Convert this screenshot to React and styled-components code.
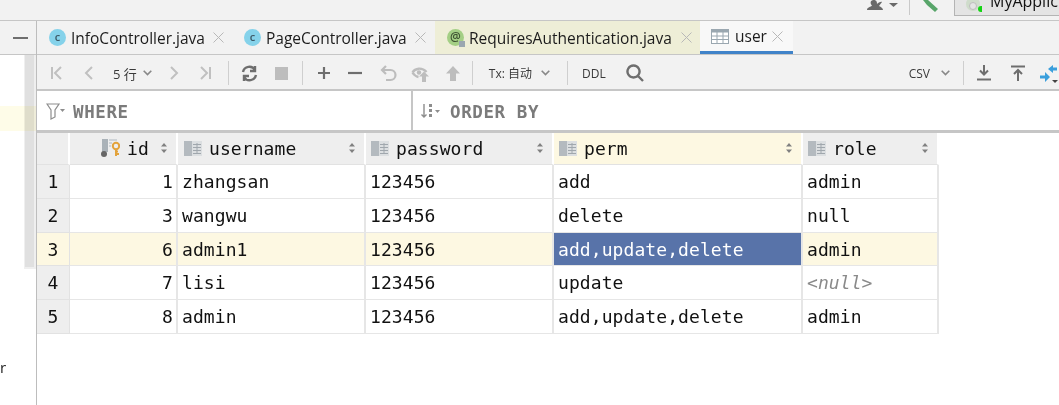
import React from 'react';
import styled, {createGlobalStyle} from 'styled-components';

const Global = createGlobalStyle`
html, body {
  margin: 0;
  padding: 0;
  background: #fff;
}
`;

const mono = '"DejaVu Sans Mono", "Liberation Mono", monospace';
const ui = '"Open Sans", "Noto Sans", "Noto Sans CJK SC", sans-serif';

const Page = styled.div`
width: 1059px;
height: 405px;
overflow: hidden;
display: flex;
flex-direction: column;
font-family: ${ui};
`;

const TopBar = styled.div`
height: 20px;
flex: none;
background: #f2f2f2;
border-bottom: 1px solid #c6c6c6;
display: flex;
justify-content: flex-end;
align-items: flex-start;
`;

const TopIcon = styled.svg`
display: block;
flex: none;
`;

const Divider = styled.div`
width: 1px;
height: 15px;
background: #c9c9c9;
margin: 0 10px 0 11px;
`;

const RunConfig = styled.div`
width: 105px;
height: 16px;
margin-left: 14px;
background: #e4e4e4;
border-left: 1px solid #b4b4b4;
border-bottom: 1px solid #b4b4b4;
box-sizing: border-box;
padding-left: 10px;
display: flex;
gap: 8px;
align-items: flex-start;
overflow: hidden;
`;

const RunName = styled.span`
font-size: 16px;
line-height: 20px;
margin-top: -9px;
color: #111;
white-space: nowrap;
`;

const Main = styled.div`
flex: 1;
display: flex;
min-height: 0;
`;

const Side = styled.div`
width: 36px;
flex: none;
border-right: 1px solid #bdbdbd;
display: flex;
flex-direction: column;
`;

const SideHead = styled.div`
height: 33px;
flex: none;
background: #f2f2f2;
border-bottom: 1px solid #c6c6c6;
display: flex;
align-items: center;
padding-left: 13px;
`;

const Minus = styled.div`
width: 15px;
height: 2px;
background: #6e6e6e;
`;

const SideBody = styled.div`
flex: 1;
position: relative;
background: #fff;
padding-top: 51px;
`;

const Highlight = styled.div`
height: 25px;
background: #fefce8;
`;

const Scroll = styled.div`
position: absolute;
top: 0;
right: 0;
width: 9px;
height: 212px;
background: #e0e0e0;
border-left: 1px solid #efefef;
border-right: 2px solid #efefef;
border-bottom: 2px solid #efefef;
mix-blend-mode: multiply;
`;

const Clip = styled.div`
margin-top: 226px;
font-size: 15px;
line-height: 20px;
color: #222;
`;

const Content = styled.div`
flex: 1;
min-width: 0;
display: flex;
flex-direction: column;
`;

const TabBar = styled.div`
height: 33px;
flex: none;
display: flex;
background: #f2f2f2;
border-bottom: 1px solid #c6c6c6;
`;

const Tab = styled.div`
display: flex;
align-items: center;
height: 100%;
flex: none;
box-sizing: border-box;
width: ${p => p.$w}px;
padding-left: ${p => p.$pad}px;
background: ${p => p.$bg || 'transparent'};
border-bottom: ${p => p.$active ? '3px solid #4083c9' : 'none'};
font-size: 15.5px;
color: #1c1c1c;
white-space: nowrap;
`;

const TabLabel = styled.span`
margin-left: ${p => p.$gap}px;
`;

const Close = styled.svg`
margin-left: auto;
margin-right: ${p => p.$mr}px;
flex: none;
`;

const Badge = styled.div`
position: relative;
flex: none;
width: ${p => p.$size}px;
height: ${p => p.$size}px;
border-radius: 50%;
background: ${p => p.$bg};
color: ${p => p.$fg};
font-size: ${p => p.$font}px;
font-weight: 600;
line-height: ${p => p.$size - 1}px;
text-align: center;
`;

const Lock = styled.i`
position: absolute;
right: -1px;
bottom: -1px;
width: 6px;
height: 6px;
background: #9aa7b0;
`;

const Toolbar = styled.div`
height: 36px;
flex: none;
box-sizing: border-box;
background: #f2f2f2;
border-bottom: 2px solid #c6c6c6;
display: flex;
align-items: center;
padding: 2px 0 0 13px;
overflow: hidden;
`;

const Sep = styled.div`
flex: none;
width: 1px;
height: 24px;
background: #cfcfcf;
margin: ${p => p.$m};
`;

const ToolText = styled.span`
flex: none;
font-size: ${p => p.$size || 12}px;
color: #3a3a3a;
margin: ${p => p.$m || 0};
white-space: nowrap;
`;

const Tool = styled.svg`
display: block;
flex: none;
margin: ${p => p.$m || 0};
`;

const FilterRow = styled.div`
height: 39px;
flex: none;
display: flex;
background: #fff;
border-bottom: 3px solid #c6c6c6;
`;

const Filter = styled.div`
width: ${p => p.$w}px;
box-sizing: border-box;
padding: 2px 0 0 ${p => p.$pad}px;
display: flex;
align-items: center;
gap: ${p => p.$gap}px;
border-right: ${p => p.$line ? '2px solid #c6c6c6' : 'none'};
font-family: ${mono};
font-weight: 700;
font-size: 17.5px;
letter-spacing: 0.6px;
color: #7b7b7b;
`;

const Grid = styled.div`
display: grid;
grid-template-columns: 33px 108px 188px 188px 249px 136px;
width: 902px;
font-family: ${mono};
font-size: 18px;
letter-spacing: 0.08px;
color: #111;
`;

const HeadCell = styled.div`
height: 32px;
box-sizing: border-box;
background: ${p => p.$hot ? '#fdf8e2' : '#eeeeee'};
border-right: 2px solid #fff;
border-bottom: 1px solid #e2e2e2;
display: flex;
align-items: center;
padding: 0 9px 1px ${p => p.$pad ?? 6}px;
gap: 7px;
`;

const HeadName = styled.span`
margin-right: auto;
`;

const Corner = styled(HeadCell)`
padding: 0;
`;

const Num = styled.div`
height: ${p => p.$h}px;
box-sizing: border-box;
background: ${p => p.$on ? '#fdf8e2' : '#eeeeee'};
border-bottom: 1px solid #e2e2e2;
border-right: 1px solid #e2e2e2;
display: flex;
align-items: center;
justify-content: center;
`;

const Cell = styled.div`
height: ${p => p.$h}px;
box-sizing: border-box;
background: ${p => p.$sel ? '#5873a9' : p.$on ? '#fdf8e2' : '#fff'};
color: ${p => p.$sel ? '#fff' : p.$nil ? '#8a8a8a' : '#111'};
font-style: ${p => p.$nil ? 'italic' : 'normal'};
border-right: 2px solid #e6e6e6;
border-bottom: 1px solid #e6e6e6;
display: flex;
align-items: center;
justify-content: ${p => p.$num ? 'flex-end' : 'flex-start'};
padding: 0 3px 0 4px;
white-space: nowrap;
`;

const TableIcon = () => (
  <svg width="18" height="15" viewBox="0 0 18 15" style={{flex: 'none'}}>
    <rect x="0.5" y="0.5" width="17" height="14" fill="#fff" stroke="#9aa7b0"/>
    <rect x="0" y="0" width="18" height="3.5" fill="#9aa7b0"/>
    <path d="M0 7h18M0 10.5h18M6 3v12M12 3v12" stroke="#9aa7b0" strokeWidth="1"/>
  </svg>
);

const CloseIcon = ({mr}) => (
  <Close $mr={mr} width="11" height="11" viewBox="0 0 11 11">
    <path d="M.5.5l10 10M10.5.5l-10 10" stroke="#b8b8b8" strokeWidth="1"/>
  </Close>
);

const ColumnIcon = () => (
  <svg width="18" height="15" viewBox="0 0 18 15" style={{flex: 'none'}}>
    <rect x="0" y="0" width="8" height="15" fill="#b4babf"/>
    <rect x="8" y="0" width="10" height="15" fill="#dcdfe1"/>
    <path d="M9 3.5h8M9 6.5h8M9 9.5h8M9 12.5h8M13 2v11" stroke="#a0a7ad" strokeWidth="1"/>
  </svg>
);

const KeyColumnIcon = () => (
  <svg width="19" height="18" viewBox="0 0 19 18" style={{flex: 'none'}}>
    <rect x="1" y="0" width="6" height="13" fill="#aab2b8"/>
    <path d="M8 1h8M8 4h3M8 7h2" stroke="#c4cacf" strokeWidth="1.5"/>
    <circle cx="3" cy="15" r="3" fill="#666"/>
    <circle cx="15" cy="7" r="3.2" fill="none" stroke="#e3a33c" strokeWidth="2"/>
    <path d="M15 10v7M15 15h3M15 12.5h2" stroke="#e3a33c" strokeWidth="2"/>
  </svg>
);

const SortIcon = () => (
  <svg width="6" height="10" viewBox="0 0 6 10" style={{flex: 'none'}}>
    <path d="M3 0l3 3.5H0zM3 10L0 6.500h6z" fill="#808080"/>
  </svg>
);

const Chevron = ({m, color = '#888'}) => (
  <Tool $m={m} width="9" height="6" viewBox="0 0 9 6">
    <path d="M.7.7l3.8 3.8L8.300.7" fill="none" stroke={color} strokeWidth="1.6"/>
  </Tool>
);

const Stroke = ({w = 16, h = 16, m, d, color = '#6e6e6e', sw = 2}) => (
  <Tool $m={m} width={w} height={h} viewBox={`0 0 ${w} ${h}`}>
    <path d={d} fill="none" stroke={color} strokeWidth={sw}/>
  </Tool>
);

const tabs = [
  {w: 197, pad: 12, mr: 10, gap: 5, label: 'InfoController.java', icon: <Badge $size={17} $bg="#85d2ea" $fg="#3d5a68" $font={11}>c</Badge>},
  {w: 201, pad: 10, mr: 9, gap: 5, label: 'PageController.java', icon: <Badge $size={17} $bg="#85d2ea" $fg="#3d5a68" $font={11}>c</Badge>},
  {w: 265, pad: 12, mr: 8, gap: 5, label: 'RequiresAuthentication.java', icon: <Badge $size={17} $bg="#a4cf85" $fg="#3f5433" $font={12}>@<Lock/></Badge>, bg: '#eeeed7'},
  {w: 93, pad: 11, mr: 10, gap: 6, label: 'user', icon: <TableIcon/>, bg: '#f8f8f8', active: true},
];

const columns = [
  {name: 'id', pad: 31, icon: <KeyColumnIcon/>},
  {name: 'username', pad: 6, icon: <ColumnIcon/>},
  {name: 'password', pad: 5, icon: <ColumnIcon/>},
  {name: 'perm', pad: 5, hot: true, icon: <ColumnIcon/>},
  {name: 'role', pad: 5, icon: <ColumnIcon/>},
];

const rows = [
  {n: 1, h: 34, cells: [1, 'zhangsan', '123456', 'add', 'admin']},
  {n: 2, h: 34, cells: [3, 'wangwu', '123456', 'delete', 'null']},
  {n: 3, h: 33, on: true, cells: [6, 'admin1', '123456', 'add,update,delete', 'admin']},
  {n: 4, h: 34, cells: [7, 'lisi', '123456', 'update', '<null>']},
  {n: 5, h: 34, cells: [8, 'admin', '123456', 'add,update,delete', 'admin']},
];

const App = () => {
  return (
    <Page>
      <Global/>
      <TopBar>
        <TopIcon width="31" height="10" viewBox="0 0 31 10">
          <path d="M0 10c0-3 4-3 5-4.500C3 4 3 0 6.500 0S10 2.500 10 4c1-1 4-3 5-2l-3 4c2 1 4 2 4 4z" fill="#6a6a6a"/>
          <path d="M22 3h9l-4.500 4z" fill="#6a6a6a"/>
        </TopIcon>
        <Divider/>
        <TopIcon width="20" height="12" viewBox="0 0 20 12">
          <path d="M3 0h5l10 9-3 3-8-7z" fill="#58a56a"/>
        </TopIcon>
        <RunConfig>
          <TopIcon width="17" height="15" viewBox="0 0 17 15">
            <circle cx="8" cy="4" r="7" fill="#cfdccb"/>
            <circle cx="8" cy="6" r="3.5" fill="#e4e4e4" stroke="#bdbdbd"/>
            <circle cx="16" cy="9" r="3" fill="#14d414"/>
          </TopIcon>
          <RunName>MyApplic</RunName>
        </RunConfig>
      </TopBar>
      <Main>
        <Side>
          <SideHead><Minus/></SideHead>
          <SideBody>
            <Highlight/>
            <Scroll/>
            <Clip>r</Clip>
          </SideBody>
        </Side>
        <Content>
          <TabBar>
            {tabs.map(t => (
              <Tab key={t.label} $w={t.w} $pad={t.pad} $bg={t.bg} $active={t.active}>
                {t.icon}
                <TabLabel $gap={t.gap}>{t.label}</TabLabel>
                <CloseIcon mr={t.mr}/>
              </Tab>
            ))}
          </TabBar>
          <Toolbar>
            <Stroke w={13} d="M2 2v12M11 2L5 8l6 6" color="#c0c0c0"/>
            <Stroke m="0 0 0 20px" w={11} d="M9 2L3 8l6 6" color="#c0c0c0"/>
            <ToolText $size={13} $m="0 0 0 19px">5 行</ToolText>
            <Chevron m="0 0 0 6px"/>
            <Stroke m="0 0 0 17px" w={11} d="M2 2l6 6-6 6" color="#c0c0c0"/>
            <Stroke m="0 0 0 19px" w={13} d="M2 2l6 6-6 6M11 2v12" color="#c0c0c0"/>
            <Sep $m="0 12px 0 16px"/>
            <Stroke w={17} h={17} d="M2 7a6.5 6.5 0 0 1 12-2M15 10a6.5 6.5 0 0 1-12 2M14 1v5h-5M3 16v-5h5" sw={2.4}/>
            <Tool $m="0 0 0 17px" width="13" height="13" viewBox="0 0 13 13"><rect width="13" height="13" fill="#bdbdbd"/></Tool>
            <Sep $m="0 14px 0 14px"/>
            <Stroke w={14} h={14} d="M7 1v12M1 7h12" sw={2.2}/>
            <Stroke m="0 0 0 17px" w={14} h={14} d="M0 7h14" sw={2.2}/>
            <Stroke m="0 0 0 18px" w={17} h={17} d="M6 1L2 5l4 4M2.500 5h8a5 5 0 0 1 0 10H6" color="#bdbdbd" sw={2.2}/>
            <Tool $m="0 0 0 14px" width="19" height="17" viewBox="0 0 19 17">
              <path d="M1.500 7.500C4 3 11 2 15.500 7" fill="none" stroke="#bdbdbd" strokeWidth="2.4"/>
              <path d="M1.500 7.500C3 10 5 11.500 7.500 12" fill="none" stroke="#bdbdbd" strokeWidth="2.4"/>
              <circle cx="8" cy="7.500" r="2.200" fill="#bdbdbd"/>
              <path d="M13 6.500l5 5h-3V17h-4v-5.500H8z" fill="#bdbdbd"/>
            </Tool>
            <Tool $m="0 0 0 16px" width="14" height="15" viewBox="0 0 14 15"><path d="M7 0l7 7.500H10V15H4V7.500H0z" fill="#bdbdbd"/></Tool>
            <Sep $m="0 16px 0 12px"/>
            <ToolText>Tx: 自动</ToolText>
            <Chevron m="0 0 0 9px"/>
            <Sep $m="0 14px 0 17px"/>
            <ToolText>DDL</ToolText>
            <Stroke m="0 0 0 20px" w={18} h={18} d="M7.500 1.500a6 6 0 1 0 .01 0M12 12l5 5" sw={2.4}/>
            <ToolText $m="0 0 0 265px">CSV</ToolText>
            <Chevron m="0 0 0 11px"/>
            <Sep $m="0 12px 0 13px"/>
            <Stroke w={16} h={16} d="M8 0v9M4 5.500l4 4 4-4M1 14.500h14"/>
            <Stroke m="0 0 0 18px" w={16} h={16} d="M1 1.500h14M8 16V6M4 9l4-4 4 4"/>
            <Tool $m="0 0 0 14px" width="18" height="20" viewBox="0 0 18 20">
              <path d="M8 6l5-4v2.500h4v3h-4V10zM10 14l-5-5v3.500H0v3h5V19z" fill="#3b9fdc"/>
              <path d="M12 17h6l-3 3z" fill="#444"/>
            </Tool>
          </Toolbar>
          <FilterRow>
            <Filter $w={376} $pad={9} $gap={8} $line>
              <Tool width="19" height="17" viewBox="0 0 19 17">
                <path d="M1 1h12L9 7v7l-4 2V7z" fill="none" stroke="#8d8d8d" strokeWidth="1.2"/>
                <path d="M14 6h5l-2.500 3z" fill="#8d8d8d"/>
              </Tool>
              WHERE
            </Filter>
            <Filter $w={600} $pad={8} $gap={10}>
              <Tool width="19" height="17" viewBox="0 0 19 17">
                <path d="M3 1v13M.5 11.500L3 14l2.500-2.500" fill="none" stroke="#8d8d8d" strokeWidth="1.4"/>
                <path d="M8 1h3v3H8zM8 6h3v3H8zM8 11h3v3H8z" fill="#8d8d8d"/>
                <path d="M14 7h5l-2.500 3z" fill="#8d8d8d"/>
              </Tool>
              ORDER BY
            </Filter>
          </FilterRow>
          <Grid>
            <Corner/>
            {columns.map(c => (
              <HeadCell key={c.name} $hot={c.hot} $pad={c.pad}>
                {c.icon}
                <HeadName>{c.name}</HeadName>
                <SortIcon/>
              </HeadCell>
            ))}
            {rows.map(r => (
              <React.Fragment key={r.n}>
                <Num $h={r.h} $on={r.on}>{r.n}</Num>
                {r.cells.map((v, i) => (
                  <Cell
                    key={i}
                    $h={r.h}
                    $on={r.on}
                    $num={i === 0}
                    $sel={r.on && i === 3}
                    $nil={v === '<null>'}
                  >{v}</Cell>
                ))}
              </React.Fragment>
            ))}
          </Grid>
        </Content>
      </Main>
    </Page>
  )
}

export default App
